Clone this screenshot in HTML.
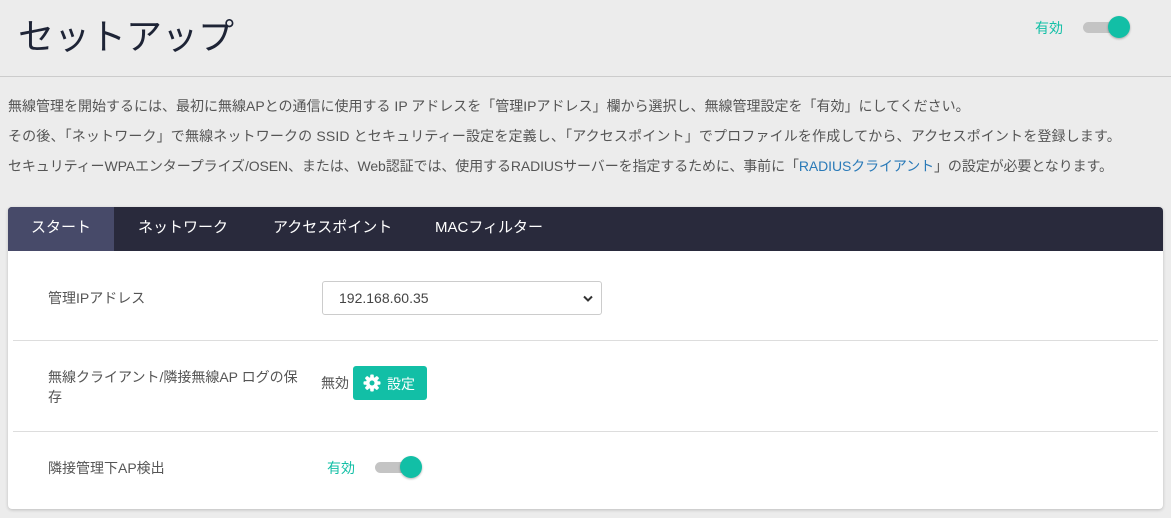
<!DOCTYPE html>
<html><head><meta charset="utf-8"><style>
*{margin:0;padding:0;box-sizing:border-box}
body{width:1171px;height:518px;background:#ececec;font-family:"Liberation Sans","Noto Sans CJK JP",sans-serif;color:#555;position:relative;overflow:hidden}
.abs{position:absolute;white-space:nowrap}
h1{position:absolute;left:18px;top:8px;font-size:36px;font-weight:normal;color:#1e2436}
.hr{position:absolute;left:0;right:0;top:76px;height:1px;background:#ccc}
.p{font-size:14px;color:#555}
.tg{position:absolute;width:36px;height:11px;border-radius:6px;background:#c4c4c4}
.knob{position:absolute;width:22px;height:22px;border-radius:50%;background:#12bfa6;box-shadow:0 1px 2px rgba(0,0,0,.3)}
.card{position:absolute;left:8px;top:207px;width:1155px;height:302px;background:#fff;border-radius:4px;box-shadow:0 1px 3px rgba(0,0,0,.2);overflow:hidden}
.tabs{height:44px;background:#292a3c;position:relative}
.tab{position:absolute;top:0;height:44px;line-height:42px;color:#fff;font-size:15px}
.line{position:absolute;left:5px;right:5px;height:1px;background:#ddd}
.lbl{font-size:14px;color:#555}
</style></head><body>
<h1>セットアップ</h1>
<div class="abs" style="left:1035px;top:18px;font-size:14px;color:#12bfa6">有効</div>
<div class="tg" style="left:1083px;top:22px"></div>
<div class="knob" style="left:1108px;top:16px"></div>
<div class="hr"></div>
<div class="abs p" style="left:8px;top:96px">無線管理を開始するには、最初に無線APとの通信に使用する IP アドレスを「管理IPアドレス」欄から選択し、無線管理設定を「有効」にしてください。</div>
<div class="abs p" style="left:8px;top:126px;letter-spacing:0.15px">その後、「ネットワーク」で無線ネットワークの SSID とセキュリティー設定を定義し、「アクセスポイント」でプロファイルを作成してから、アクセスポイントを登録します。</div>
<div class="abs p" style="left:8px;top:156px;letter-spacing:-0.1px">セキュリティーWPAエンタープライズ/OSEN、または、Web認証では、使用するRADIUSサーバーを指定するために、事前に「<span style="color:#2a7ab8">RADIUSクライアント</span>」の設定が必要となります。</div>
<div class="card">
 <div class="tabs">
  <div class="tab" style="left:0;width:106px;background:#474a69;text-align:center">スタート</div>
  <div class="tab" style="left:130px">ネットワーク</div>
  <div class="tab" style="left:265px">アクセスポイント</div>
  <div class="tab" style="left:427px">MACフィルター</div>
 </div>
 <div class="abs lbl" style="left:40px;top:81px">管理IPアドレス</div>
 <div style="position:absolute;left:314px;top:74px;width:280px;height:34px;border:1px solid #ccc;border-radius:3px;font-size:14px;color:#444;padding:8px 16px">192.168.60.35
  <svg style="position:absolute;right:8px;top:13px" width="10" height="7" viewBox="0 0 10 7"><path d="M1 1.5L5 5.5 9 1.5" stroke="#333" stroke-width="2" fill="none"/></svg></div>
 <div class="line" style="top:133px"></div>
 <div class="abs lbl" style="left:40px;top:160px;line-height:20px">無線クライアント/隣接無線AP ログの保<br>存</div>
 <div class="abs lbl" style="left:313px;top:166px">無効</div>
 <div style="position:absolute;left:345px;top:159px;width:74px;height:34px;background:#12bfa6;border-radius:3px;color:#fff;font-size:14px;padding:8px 0 0 34px">設定
  <svg style="position:absolute;left:10px;top:8px" width="18" height="18" viewBox="0 0 18 18"><g fill="#fff"><circle cx="9" cy="9" r="6"/><rect x="7.2" y="0.5" width="3.6" height="17" rx="1"/><rect x="7.2" y="0.5" width="3.6" height="17" rx="1" transform="rotate(45 9 9)"/><rect x="7.2" y="0.5" width="3.6" height="17" rx="1" transform="rotate(90 9 9)"/><rect x="7.2" y="0.5" width="3.6" height="17" rx="1" transform="rotate(135 9 9)"/></g><circle cx="9" cy="9" r="2.5" fill="#12bfa6"/></svg></div>
 <div class="line" style="top:224px"></div>
 <div class="abs lbl" style="left:40px;top:251px">隣接管理下AP検出</div>
 <div class="abs" style="left:319px;top:251px;font-size:14px;color:#12bfa6">有効</div>
 <div class="tg" style="left:367px;top:255px"></div>
 <div class="knob" style="left:392px;top:249px"></div>
</div>
</body></html>
